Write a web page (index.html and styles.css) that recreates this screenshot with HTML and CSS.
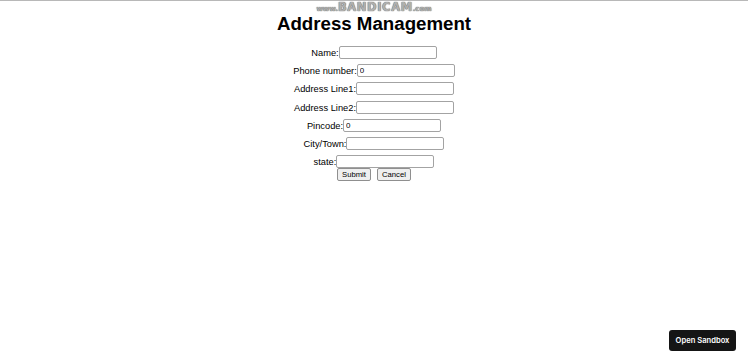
FILE: index.html
```html
<!DOCTYPE html>
<html lang="en">
<head>
<meta charset="utf-8">
<title>Address Management</title>
<link rel="stylesheet" href="styles.css">
</head>
<body>
<div class="watermark"><span class="wm-small">www.</span><span class="wm-big">BANDICAM</span><span class="wm-small">.com</span></div>
<main class="page">
  <h1 class="title">Address Management</h1>
  <form class="form">
    <div class="fields">
      <div class="row"><label class="label">Name:</label><input class="input" type="text"></div>
      <div class="row"><label class="label">Phone number:</label><input class="input" type="text" value="0"></div>
      <div class="row"><label class="label">Address Line1:</label><input class="input" type="text"></div>
      <div class="row"><label class="label">Address Line2:</label><input class="input" type="text"></div>
      <div class="row"><label class="label">Pincode:</label><input class="input" type="text" value="0"></div>
      <div class="row"><label class="label">City/Town:</label><input class="input" type="text"></div>
      <div class="row"><label class="label">state:</label><input class="input" type="text"></div>
    </div>
    <div class="actions">
      <button class="btn" type="button">Submit</button>
      <button class="btn" type="button">Cancel</button>
    </div>
  </form>
</main>
<button class="sandbox" type="button">Open Sandbox</button>
</body>
</html>
```

FILE: styles.css
```css
html, body {
  margin: 0;
  padding: 0;
  background: #ffffff;
}

body {
  border-top: 1px solid #b8b8b8;
  height: 359px;
  font-family: "Liberation Sans", Arial, sans-serif;
  color: #000;
}

.watermark {
  position: absolute;
  top: 3px;
  left: 316px;
  width: 116px;
  height: 9px;
  line-height: 9px;
  display: flex;
  align-items: baseline;
  justify-content: center;
  font-family: "DejaVu Sans", sans-serif;
  font-weight: bold;
  color: #b0b0b0;
  text-shadow: 0 0 1px #6d6d6d, 0 0 1px #6d6d6d;
  white-space: nowrap;
}

.wm-small {
  font-size: 7px;
}

.wm-big {
  font-size: 11.5px;
  letter-spacing: 0.6px;
}

.page {
  display: flex;
  flex-direction: column;
  align-items: center;
}

.title {
  margin: 13px 0 0 0;
  font-size: 18.7px;
  line-height: 20px;
  font-weight: bold;
}

.form {
  margin-top: 12px;
  display: flex;
  flex-direction: column;
  align-items: center;
}

.fields {
  display: flex;
  flex-direction: column;
  align-items: center;
  gap: 5.2px;
}

.row {
  display: flex;
  align-items: flex-start;
  height: 13px;
}

.label {
  font-size: 9.3px;
  line-height: 13px;
  padding-top: 1px;
}

.input {
  box-sizing: border-box;
  width: 98px;
  height: 13px;
  margin: 0;
  padding: 0 2px;
  border: 1px solid #a3a3a3;
  border-radius: 2px;
  font-family: "Liberation Sans", Arial, sans-serif;
  font-size: 8px;
  color: #000;
  background: #fff;
  outline: none;
}

.actions {
  display: flex;
  gap: 6px;
}

.btn {
  box-sizing: border-box;
  width: 34px;
  height: 13px;
  margin: 0;
  padding: 0;
  border: 1px solid #8f8f8f;
  border-radius: 2px;
  background: #efefef;
  font-family: "Liberation Sans", Arial, sans-serif;
  font-size: 7.7px;
  color: #000;
}

.sandbox {
  position: fixed;
  left: 669px;
  top: 330px;
  width: 67px;
  height: 21px;
  margin: 0;
  padding: 0;
  border: none;
  border-radius: 3px;
  background: #151515;
  color: #ffffff;
  font-family: Inter, "Noto Sans", sans-serif;
  font-weight: 600;
  font-size: 7.6px;
}
```
